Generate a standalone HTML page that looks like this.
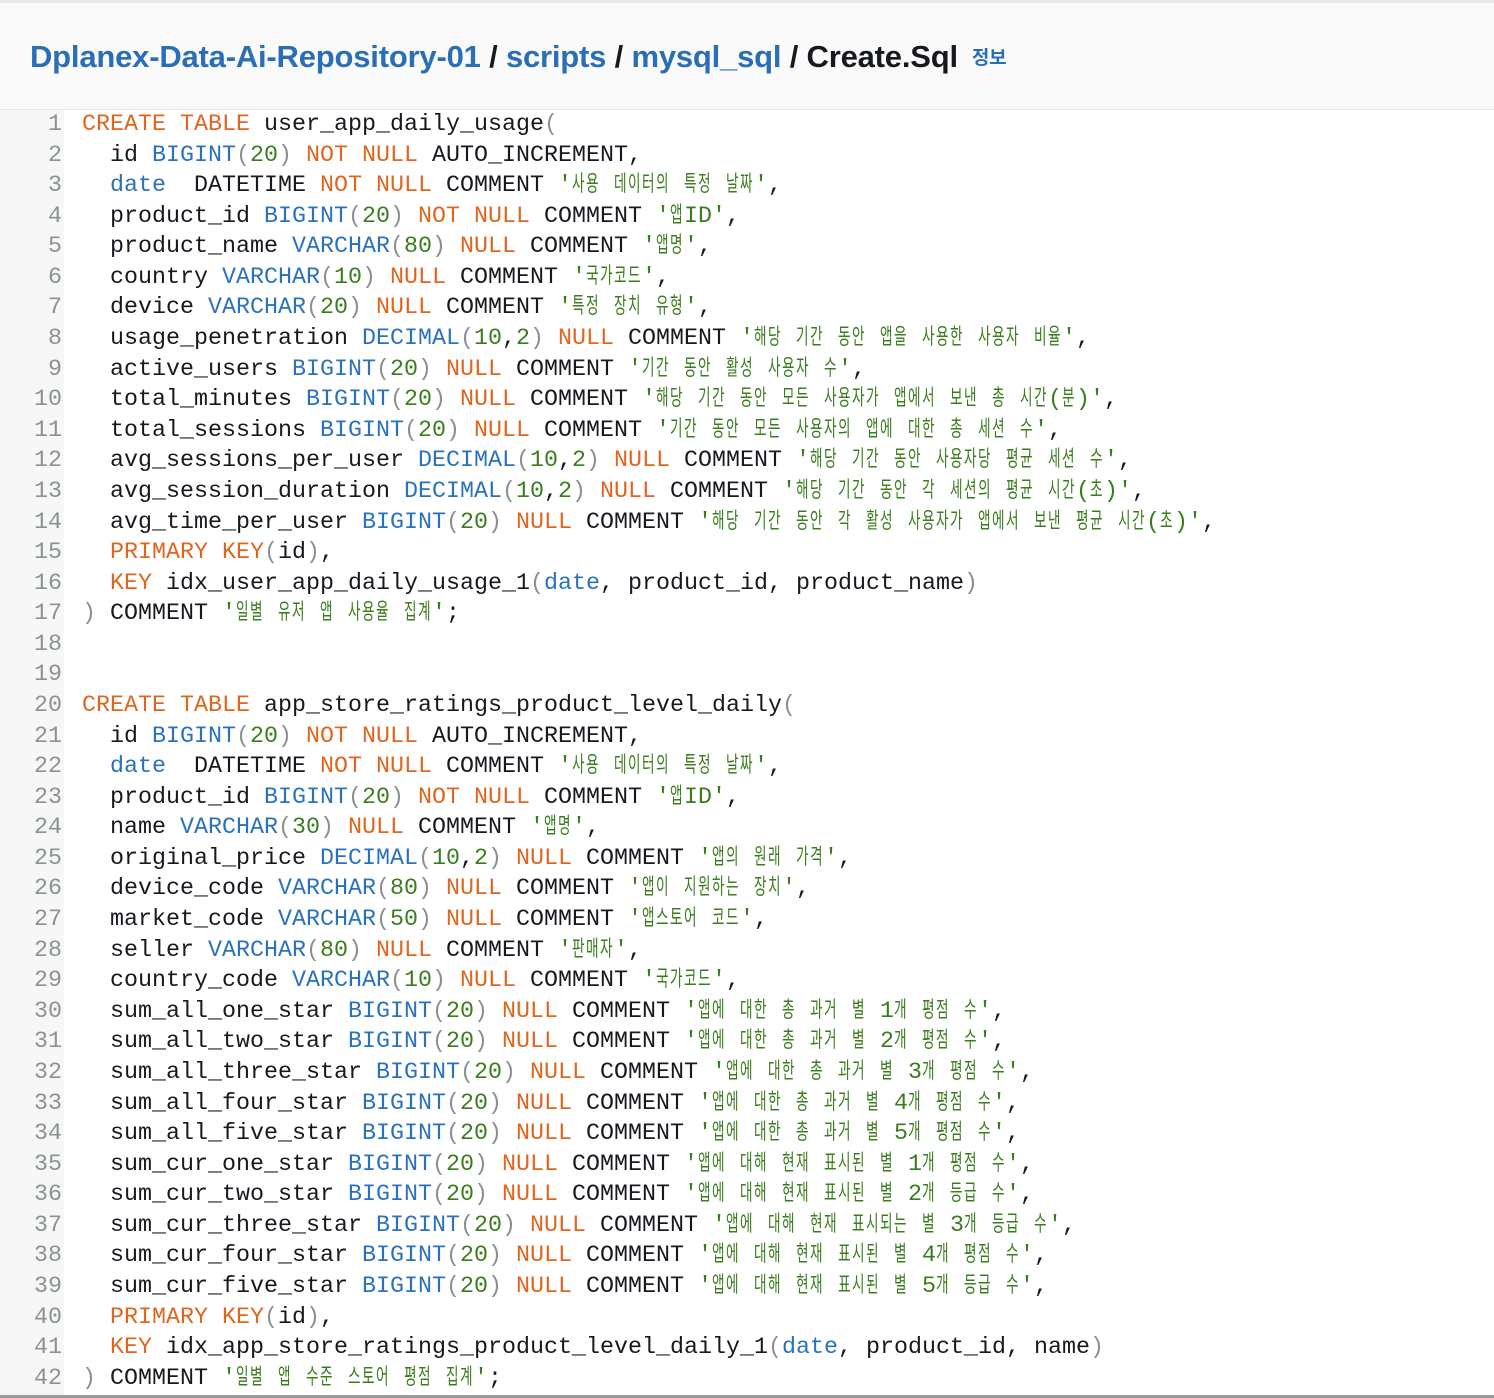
<!DOCTYPE html>
<html><head><meta charset="utf-8">
<style>
html,body{margin:0;padding:0;background:#fff;width:1494px;height:1398px;overflow:hidden}
.top{position:absolute;left:0;top:0;width:1494px;height:3px;background:#e8e8e8}
.hdr{position:absolute;left:0;top:3px;width:1494px;height:106px;background:#fafafa;border-bottom:1px solid #e6e6e6}
.title{position:absolute;left:30px;top:36px;font-family:"Liberation Sans","Noto Sans CJK KR",sans-serif;font-weight:bold;font-size:31px;color:#16191f;white-space:nowrap;letter-spacing:-0.2px}
.title a{color:#2a6fb5;text-decoration:none}
.title .info{font-size:19px;color:#2a6fb5;margin-left:14px;font-weight:bold;vertical-align:3px}
.gut{position:absolute;left:0;top:110px;width:64px;height:1288px;background:#f7f7f7}
.code{position:absolute;left:0;top:110px;font-family:"Liberation Mono",monospace;font-size:23.33px;line-height:30.59px;color:#16191f}
.l{height:30.59px;white-space:pre;line-height:30.59px;overflow:visible}
.n{display:inline-block;width:62px;text-align:right;color:#8a9393;margin-right:20px}
.k{color:#e0661f}.t{color:#2a72bd}.g{color:#3b7d1e}.p{color:#8b9090}
b.h{display:inline-block;width:14px;font-weight:normal;line-height:20px}
b.h>i{display:inline-block;font-style:normal;font-family:"Noto Sans CJK KR",sans-serif;font-size:22px;line-height:20px;transform:scaleX(.62);transform-origin:0 0}
.bot{position:absolute;left:0;top:1395px;width:1494px;height:3px;background:#9a9a9a}
</style></head><body>
<div class="top"></div>
<div class="hdr"><div class="title"><a>Dplanex-Data-Ai-Repository-01</a> / <a>scripts</a> / <a>mysql_sql</a> / Create.Sql<span class="info">정보</span></div></div>
<div class="gut"></div>
<div class="code" id="code"><div class="l"><span class="n">1</span><span class="k">CREATE TABLE</span> user_app_daily_usage<span class="p">(</span></div><div class="l"><span class="n">2</span>  id <span class="t">BIGINT</span><span class="p">(</span><span class="g">20</span><span class="p">)</span> <span class="k">NOT NULL</span> AUTO_INCREMENT,</div><div class="l"><span class="n">3</span>  <span class="t">date</span>  DATETIME <span class="k">NOT NULL</span> COMMENT <span class="g">'사용 데이터의 특정 날짜'</span>,</div><div class="l"><span class="n">4</span>  product_id <span class="t">BIGINT</span><span class="p">(</span><span class="g">20</span><span class="p">)</span> <span class="k">NOT NULL</span> COMMENT <span class="g">'앱ID'</span>,</div><div class="l"><span class="n">5</span>  product_name <span class="t">VARCHAR</span><span class="p">(</span><span class="g">80</span><span class="p">)</span> <span class="k">NULL</span> COMMENT <span class="g">'앱명'</span>,</div><div class="l"><span class="n">6</span>  country <span class="t">VARCHAR</span><span class="p">(</span><span class="g">10</span><span class="p">)</span> <span class="k">NULL</span> COMMENT <span class="g">'국가코드'</span>,</div><div class="l"><span class="n">7</span>  device <span class="t">VARCHAR</span><span class="p">(</span><span class="g">20</span><span class="p">)</span> <span class="k">NULL</span> COMMENT <span class="g">'특정 장치 유형'</span>,</div><div class="l"><span class="n">8</span>  usage_penetration <span class="t">DECIMAL</span><span class="p">(</span><span class="g">10</span>,<span class="g">2</span><span class="p">)</span> <span class="k">NULL</span> COMMENT <span class="g">'해당 기간 동안 앱을 사용한 사용자 비율'</span>,</div><div class="l"><span class="n">9</span>  active_users <span class="t">BIGINT</span><span class="p">(</span><span class="g">20</span><span class="p">)</span> <span class="k">NULL</span> COMMENT <span class="g">'기간 동안 활성 사용자 수'</span>,</div><div class="l"><span class="n">10</span>  total_minutes <span class="t">BIGINT</span><span class="p">(</span><span class="g">20</span><span class="p">)</span> <span class="k">NULL</span> COMMENT <span class="g">'해당 기간 동안 모든 사용자가 앱에서 보낸 총 시간(분)'</span>,</div><div class="l"><span class="n">11</span>  total_sessions <span class="t">BIGINT</span><span class="p">(</span><span class="g">20</span><span class="p">)</span> <span class="k">NULL</span> COMMENT <span class="g">'기간 동안 모든 사용자의 앱에 대한 총 세션 수'</span>,</div><div class="l"><span class="n">12</span>  avg_sessions_per_user <span class="t">DECIMAL</span><span class="p">(</span><span class="g">10</span>,<span class="g">2</span><span class="p">)</span> <span class="k">NULL</span> COMMENT <span class="g">'해당 기간 동안 사용자당 평균 세션 수'</span>,</div><div class="l"><span class="n">13</span>  avg_session_duration <span class="t">DECIMAL</span><span class="p">(</span><span class="g">10</span>,<span class="g">2</span><span class="p">)</span> <span class="k">NULL</span> COMMENT <span class="g">'해당 기간 동안 각 세션의 평균 시간(초)'</span>,</div><div class="l"><span class="n">14</span>  avg_time_per_user <span class="t">BIGINT</span><span class="p">(</span><span class="g">20</span><span class="p">)</span> <span class="k">NULL</span> COMMENT <span class="g">'해당 기간 동안 각 활성 사용자가 앱에서 보낸 평균 시간(초)'</span>,</div><div class="l"><span class="n">15</span>  <span class="k">PRIMARY KEY</span><span class="p">(</span>id<span class="p">)</span>,</div><div class="l"><span class="n">16</span>  <span class="k">KEY</span> idx_user_app_daily_usage_1<span class="p">(</span><span class="t">date</span>, product_id, product_name<span class="p">)</span></div><div class="l"><span class="n">17</span><span class="p">)</span> COMMENT <span class="g">'일별 유저 앱 사용율 집계'</span>;</div><div class="l"><span class="n">18</span></div><div class="l"><span class="n">19</span></div><div class="l"><span class="n">20</span><span class="k">CREATE TABLE</span> app_store_ratings_product_level_daily<span class="p">(</span></div><div class="l"><span class="n">21</span>  id <span class="t">BIGINT</span><span class="p">(</span><span class="g">20</span><span class="p">)</span> <span class="k">NOT NULL</span> AUTO_INCREMENT,</div><div class="l"><span class="n">22</span>  <span class="t">date</span>  DATETIME <span class="k">NOT NULL</span> COMMENT <span class="g">'사용 데이터의 특정 날짜'</span>,</div><div class="l"><span class="n">23</span>  product_id <span class="t">BIGINT</span><span class="p">(</span><span class="g">20</span><span class="p">)</span> <span class="k">NOT NULL</span> COMMENT <span class="g">'앱ID'</span>,</div><div class="l"><span class="n">24</span>  name <span class="t">VARCHAR</span><span class="p">(</span><span class="g">30</span><span class="p">)</span> <span class="k">NULL</span> COMMENT <span class="g">'앱명'</span>,</div><div class="l"><span class="n">25</span>  original_price <span class="t">DECIMAL</span><span class="p">(</span><span class="g">10</span>,<span class="g">2</span><span class="p">)</span> <span class="k">NULL</span> COMMENT <span class="g">'앱의 원래 가격'</span>,</div><div class="l"><span class="n">26</span>  device_code <span class="t">VARCHAR</span><span class="p">(</span><span class="g">80</span><span class="p">)</span> <span class="k">NULL</span> COMMENT <span class="g">'앱이 지원하는 장치'</span>,</div><div class="l"><span class="n">27</span>  market_code <span class="t">VARCHAR</span><span class="p">(</span><span class="g">50</span><span class="p">)</span> <span class="k">NULL</span> COMMENT <span class="g">'앱스토어 코드'</span>,</div><div class="l"><span class="n">28</span>  seller <span class="t">VARCHAR</span><span class="p">(</span><span class="g">80</span><span class="p">)</span> <span class="k">NULL</span> COMMENT <span class="g">'판매자'</span>,</div><div class="l"><span class="n">29</span>  country_code <span class="t">VARCHAR</span><span class="p">(</span><span class="g">10</span><span class="p">)</span> <span class="k">NULL</span> COMMENT <span class="g">'국가코드'</span>,</div><div class="l"><span class="n">30</span>  sum_all_one_star <span class="t">BIGINT</span><span class="p">(</span><span class="g">20</span><span class="p">)</span> <span class="k">NULL</span> COMMENT <span class="g">'앱에 대한 총 과거 별 1개 평점 수'</span>,</div><div class="l"><span class="n">31</span>  sum_all_two_star <span class="t">BIGINT</span><span class="p">(</span><span class="g">20</span><span class="p">)</span> <span class="k">NULL</span> COMMENT <span class="g">'앱에 대한 총 과거 별 2개 평점 수'</span>,</div><div class="l"><span class="n">32</span>  sum_all_three_star <span class="t">BIGINT</span><span class="p">(</span><span class="g">20</span><span class="p">)</span> <span class="k">NULL</span> COMMENT <span class="g">'앱에 대한 총 과거 별 3개 평점 수'</span>,</div><div class="l"><span class="n">33</span>  sum_all_four_star <span class="t">BIGINT</span><span class="p">(</span><span class="g">20</span><span class="p">)</span> <span class="k">NULL</span> COMMENT <span class="g">'앱에 대한 총 과거 별 4개 평점 수'</span>,</div><div class="l"><span class="n">34</span>  sum_all_five_star <span class="t">BIGINT</span><span class="p">(</span><span class="g">20</span><span class="p">)</span> <span class="k">NULL</span> COMMENT <span class="g">'앱에 대한 총 과거 별 5개 평점 수'</span>,</div><div class="l"><span class="n">35</span>  sum_cur_one_star <span class="t">BIGINT</span><span class="p">(</span><span class="g">20</span><span class="p">)</span> <span class="k">NULL</span> COMMENT <span class="g">'앱에 대해 현재 표시된 별 1개 평점 수'</span>,</div><div class="l"><span class="n">36</span>  sum_cur_two_star <span class="t">BIGINT</span><span class="p">(</span><span class="g">20</span><span class="p">)</span> <span class="k">NULL</span> COMMENT <span class="g">'앱에 대해 현재 표시된 별 2개 등급 수'</span>,</div><div class="l"><span class="n">37</span>  sum_cur_three_star <span class="t">BIGINT</span><span class="p">(</span><span class="g">20</span><span class="p">)</span> <span class="k">NULL</span> COMMENT <span class="g">'앱에 대해 현재 표시되는 별 3개 등급 수'</span>,</div><div class="l"><span class="n">38</span>  sum_cur_four_star <span class="t">BIGINT</span><span class="p">(</span><span class="g">20</span><span class="p">)</span> <span class="k">NULL</span> COMMENT <span class="g">'앱에 대해 현재 표시된 별 4개 평점 수'</span>,</div><div class="l"><span class="n">39</span>  sum_cur_five_star <span class="t">BIGINT</span><span class="p">(</span><span class="g">20</span><span class="p">)</span> <span class="k">NULL</span> COMMENT <span class="g">'앱에 대해 현재 표시된 별 5개 등급 수'</span>,</div><div class="l"><span class="n">40</span>  <span class="k">PRIMARY KEY</span><span class="p">(</span>id<span class="p">)</span>,</div><div class="l"><span class="n">41</span>  <span class="k">KEY</span> idx_app_store_ratings_product_level_daily_1<span class="p">(</span><span class="t">date</span>, product_id, name<span class="p">)</span></div><div class="l"><span class="n">42</span><span class="p">)</span> COMMENT <span class="g">'일별 앱 수준 스토어 평점 집계'</span>;</div></div>
<div class="bot"></div>
<script>
(function(){
var root=document.getElementById('code');
var w=document.createTreeWalker(root,NodeFilter.SHOW_TEXT,null,false);var nodes=[];
while(w.nextNode())nodes.push(w.currentNode);
var re=/[\uAC00-\uD7A3]/;
nodes.forEach(function(t){
 if(!re.test(t.nodeValue))return;
 var f=document.createDocumentFragment();var buf='';
 for(var i=0;i<t.nodeValue.length;i++){var c=t.nodeValue[i];
  if(re.test(c)){if(buf){f.appendChild(document.createTextNode(buf));buf='';}
   var b=document.createElement('b');b.className='h';var ii=document.createElement('i');ii.textContent=c;b.appendChild(ii);f.appendChild(b);}
  else buf+=c;}
 if(buf)f.appendChild(document.createTextNode(buf));
 t.parentNode.replaceChild(f,t);
});
})();
</script>
</body></html>
